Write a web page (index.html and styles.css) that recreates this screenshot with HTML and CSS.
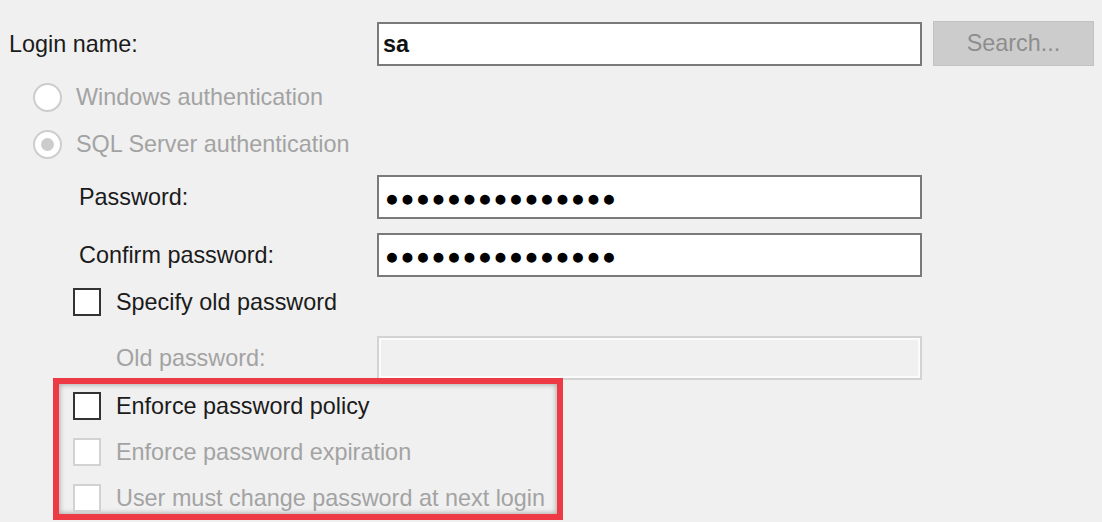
FILE: index.html
```html
<!DOCTYPE html>
<html lang="en">
<head>
<meta charset="utf-8">
<title>Login Properties</title>
<link rel="stylesheet" href="styles.css">
</head>
<body>
<div class="page">
  <div class="row row-login">
    <label class="label label-main">Login name:</label>
    <div class="input value">sa</div>
    <div class="button">Search...</div>
  </div>

  <div class="radios">
    <div class="radio-row">
      <span class="radio"></span>
      <span class="text disabled">Windows authentication</span>
    </div>
    <div class="radio-row">
      <span class="radio checked"></span>
      <span class="text disabled">SQL Server authentication</span>
    </div>
  </div>

  <div class="row row-pass">
    <label class="label label-sub">Password:</label>
    <div class="input dots">●●●●●●●●●●●●●●●</div>
  </div>
  <div class="row row-confirm">
    <label class="label label-sub">Confirm password:</label>
    <div class="input dots">●●●●●●●●●●●●●●●</div>
  </div>

  <div class="check-row row-specify">
    <span class="checkbox"></span>
    <span class="text">Specify old password</span>
  </div>

  <div class="row row-old">
    <label class="label label-old disabled">Old password:</label>
    <div class="input input-disabled"></div>
  </div>

  <div class="highlight">
    <div class="check-row">
      <span class="checkbox"></span>
      <span class="text">Enforce password policy</span>
    </div>
    <div class="check-row">
      <span class="checkbox cb-disabled"></span>
      <span class="text disabled">Enforce password expiration</span>
    </div>
    <div class="check-row">
      <span class="checkbox cb-disabled"></span>
      <span class="text disabled">User must change password at next login</span>
    </div>
  </div>
</div>
</body>
</html>
```

FILE: styles.css
```css
html, body {
  margin: 0;
  padding: 0;
  background: #f0f0f0;
}

body {
  width: 1102px;
  height: 522px;
  overflow: hidden;
  font-family: "Liberation Sans", Arial, sans-serif;
  font-size: 23.4px;
  color: #1b1b1b;
  white-space: nowrap;
}

.page {
  display: flex;
  flex-direction: column;
  padding-top: 22px;
}

.row {
  display: flex;
  align-items: center;
  height: 44px;
}

.label {
  flex: 0 0 auto;
  box-sizing: border-box;
}

.label-main {
  width: 377px;
  padding-left: 9px;
}

.label-sub {
  width: 377px;
  padding-left: 79px;
}

.label-old {
  width: 377px;
  padding-left: 116px;
}

.input {
  box-sizing: border-box;
  width: 545px;
  height: 44px;
  border: 2px solid #7a7a7a;
  background: #ffffff;
  display: flex;
  align-items: center;
  padding-left: 4px;
  color: #111;
}

.value {
  font-weight: bold;
}

.dots {
  font-size: 23px;
  letter-spacing: 1.6px;
  color: #000;
  padding-left: 6px;
  padding-top: 2px;
}

.input-disabled {
  border-color: #d3d3d3;
  background: #f0f0f0;
  box-shadow: inset 0 0 0 2px #fbfbfb;
}

.button {
  box-sizing: border-box;
  width: 161px;
  height: 45px;
  margin-left: 11px;
  margin-top: -2px;
  background: #cccccc;
  border: 1px solid #c2c2c2;
  color: #8e8e8e;
  display: flex;
  align-items: center;
  justify-content: center;
}

.radios {
  display: flex;
  flex-direction: column;
  margin-top: 8px;
}

.radio-row {
  display: flex;
  align-items: center;
  height: 47px;
  padding-left: 33px;
}

.radio {
  box-sizing: border-box;
  width: 29px;
  height: 29px;
  border-radius: 50%;
  border: 2px solid #cdcdcd;
  background: #ffffff;
  margin-right: 14px;
  display: flex;
  align-items: center;
  justify-content: center;
}

.radio.checked::after {
  content: "";
  width: 13px;
  height: 13px;
  border-radius: 50%;
  background: #cccccc;
}

.disabled {
  color: #a3a3a3;
}

.row-pass {
  margin-top: 7px;
}

.row-confirm {
  margin-top: 14px;
}

.check-row {
  display: flex;
  align-items: center;
  height: 28px;
}

.row-specify {
  margin-top: 11px;
  padding-left: 73px;
}

.checkbox {
  box-sizing: border-box;
  flex: 0 0 auto;
  width: 28px;
  height: 28px;
  border: 2px solid #333333;
  background: #ffffff;
  margin-right: 15px;
}

.cb-disabled {
  border-color: #d2d2d2;
}

.row-old {
  margin-top: 20px;
}

.highlight {
  position: relative;
  box-sizing: border-box;
  width: 510px;
  height: 142px;
  margin-left: 53px;
  margin-top: -2px;
  border: 6px solid #ee3a44;
  box-shadow: inset 0 0 5px 1px rgba(0, 0, 0, 0.28);
  padding: 8px 0 0 14px;
  display: flex;
  flex-direction: column;
  gap: 18px;
}
```
